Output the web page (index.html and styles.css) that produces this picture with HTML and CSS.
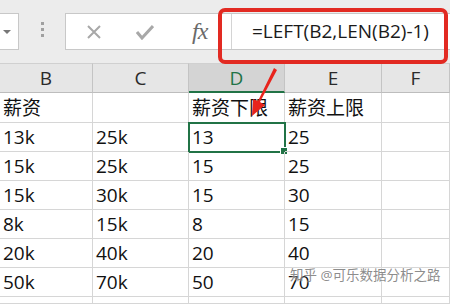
FILE: index.html
```html
<!DOCTYPE html>
<html lang="zh-CN">
<head>
    <meta charset="UTF-8">
    <title>LEFT formula</title>
    <link rel="stylesheet" href="styles.css">
</head>
<body>
    <div class="toolbar">
        <div class="namebox"><span class="drop"></span></div>
        <div class="grip"><i></i><i></i><i></i></div>
        <div class="fbar">
            <div class="ficons">
                <svg class="ico" width="16" height="16" viewBox="0 0 16 16"><path d="M2 2 L14 14 M14 2 L2 14" stroke="#a8a8a8" stroke-width="2" fill="none"/></svg>
                <svg class="ico ok" width="18" height="16" viewBox="0 0 18 16"><path d="M1 8 L6 14 L17 2" stroke="#a8a8a8" stroke-width="3" fill="none"/></svg>
                <span class="fx">fx</span>
            </div>
            <div class="formula">=LEFT(B2,LEN(B2)-1)</div>
        </div>
    </div>

    <div class="sheet">
        <div class="hd">B</div>
        <div class="hd">C</div>
        <div class="hd sel">D</div>
        <div class="hd">E</div>
        <div class="hd">F</div>

        <div class="c">薪资</div><div class="c"></div><div class="c">薪资下限</div><div class="c">薪资上限</div><div class="c"></div>
        <div class="c">13k</div><div class="c">25k</div><div class="c active">13</div><div class="c">25</div><div class="c"></div>
        <div class="c">15k</div><div class="c">25k</div><div class="c">15</div><div class="c">25</div><div class="c"></div>
        <div class="c">15k</div><div class="c">30k</div><div class="c">15</div><div class="c">30</div><div class="c"></div>
        <div class="c">8k</div><div class="c">15k</div><div class="c">8</div><div class="c">15</div><div class="c"></div>
        <div class="c">20k</div><div class="c">40k</div><div class="c">20</div><div class="c">40</div><div class="c"></div>
        <div class="c">50k</div><div class="c">70k</div><div class="c">50</div><div class="c">70</div><div class="c"></div>
        <div class="c"></div><div class="c"></div><div class="c"></div><div class="c"></div><div class="c"></div>
    </div>

    <div class="mark"></div>
    <svg class="arrow" width="40" height="60" viewBox="0 0 40 60">
        <polygon points="33,4 36,6 19,38 24,41 11,52 12,35 17,37" fill="#e8231c"/>
    </svg>
    <div class="water">知乎 @可乐数据分析之路</div>
</body>
</html>
```

FILE: styles.css
```css
html,body{
    overflow:hidden;
}
body{
    margin:0;
    width:450px;
    height:304px;
    background:#fff;
    font-family:"Open Sans","Noto Sans CJK SC",sans-serif;
    color:#111;
}
.toolbar{
    height:63px;
    background:#ececec;
    display:flex;
    align-items:flex-start;
    padding-top:13px;
    box-sizing:border-box;
}
.namebox{
    width:20px;
    height:37px;
    margin-left:-1px;
    background:#fff;
    border:1px solid #c8c8c8;
    box-sizing:border-box;
    display:flex;
    align-items:center;
    padding-left:3px;
}
.drop{
    width:0;
    height:0;
    border-left:4px solid transparent;
    border-right:4px solid transparent;
    border-top:4px solid #777;
}
.grip{
    width:46px;
    display:flex;
    flex-direction:column;
    align-items:center;
    gap:3px;
    padding-top:9px;
}
.grip i{
    width:3px;
    height:3px;
    background:#a0a0a0;
}
.fbar{
    flex:1;
    height:37px;
    background:#fff;
    border:1px solid #c8c8c8;
    border-right:0;
    box-sizing:border-box;
    display:flex;
}
.ficons{
    width:166px;
    display:flex;
    align-items:center;
    padding-left:20px;
    box-sizing:border-box;
    border-right:1px solid #d4d4d4;
}
.ico{
    display:block;
}
.ok{
    margin-left:34px;
}
.fx{
    margin-left:38px;
    font-family:"Liberation Serif",serif;
    font-style:italic;
    font-size:24px;
    color:#6a6a6a;
    letter-spacing:-1px;
}
.formula{
    padding-left:20px;
    font-size:19px;
    line-height:35px;
    color:#1a1a1a;
    white-space:nowrap;
}
.sheet{
    display:grid;
    grid-template-columns:93px 96px 96px 97px 1fr;
    grid-template-rows:30px 30px repeat(6,29px) 7px;
}
.hd{
    background:#e6e6e6;
    border-top:1px solid #d0d0d0;
    border-right:1px solid #c4c4c4;
    border-bottom:1px solid #bdbdbd;
    box-sizing:border-box;
    display:flex;
    align-items:center;
    justify-content:center;
    font-size:19px;
    color:#2a2a2a;
}
.hd.sel{
    background:#d4d4d4;
    color:#217346;
    border-bottom:2px solid #217346;
}
.c{
    border-right:1px solid #d6d6d6;
    border-bottom:1px solid #d6d6d6;
    box-sizing:border-box;
    display:flex;
    align-items:flex-end;
    padding:0 0 2px 3px;
    font-size:19px;
    line-height:24px;
    white-space:nowrap;
    position:relative;
}
.c.active{
    outline:2px solid #217346;
    outline-offset:-1px;
}
.c.active::after{
    content:"";
    position:absolute;
    right:-4px;
    bottom:-4px;
    width:6px;
    height:6px;
    background:#217346;
    border:1px solid #fff;
}
.mark{
    position:absolute;
    left:218px;
    top:8px;
    width:230px;
    height:56px;
    border:4px solid #e22a22;
    border-radius:7px;
    box-sizing:border-box;
}
.arrow{
    position:absolute;
    left:241px;
    top:64px;
}
.water{
    position:absolute;
    left:290px;
    top:264px;
    font-size:13.5px;
    white-space:nowrap;
    color:rgba(110,110,110,0.8);
    text-shadow:0 0 2px #fff;
}
```
